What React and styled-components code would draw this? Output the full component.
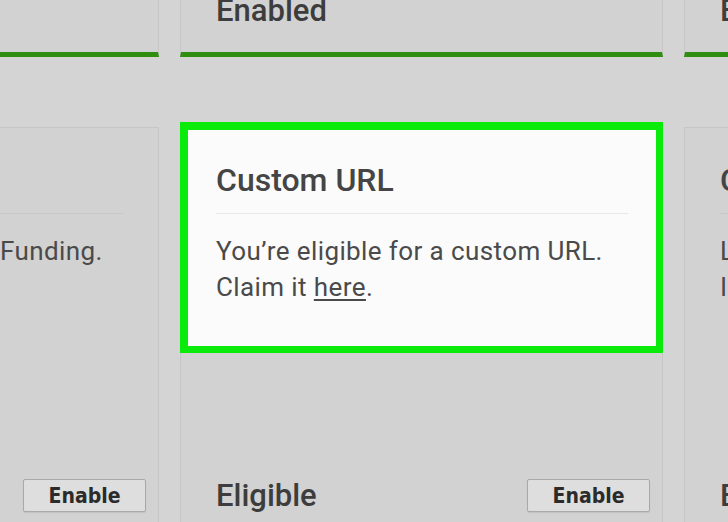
import React from "react";
import styled, { createGlobalStyle } from "styled-components";

//------------------------------ CSS ----------------------------------------
const GlobalStyle = createGlobalStyle`
    html, body {
        margin:0;
        padding:0;
        background:#d4d4d4;
        overflow:hidden;
    }
    body{
        font-family: Roboto, "Liberation Sans", sans-serif;
    }
`;
const StyledPage = styled.div`
    width:728px;
    height:522px;
    overflow:hidden;
    display:flex;
    flex-direction:column;
    gap:70px;
`;
const StyledRow = styled.div`
    display:grid;
    grid-template-columns:repeat(3, 483px);
    column-gap:21px;
    margin-left:-324px;
`;
const StyledTopCard = styled.div`
    margin-top:-6px;
    background:#d2d2d2;
    border:1px solid #c6c6c6;
    border-top:none;
    border-bottom:5px solid #2f8d10;
    padding-bottom:25px;
`;
const StyledCard = styled.div`
    background:#d2d2d2;
    border:1px solid #c6c6c6;
    min-height:480px;
    display:flex;
    flex-direction:column;
`;
const StyledPanel = styled.div`
    box-sizing:border-box;
    height:231px;
    margin:-6px -1px 0;
    border-style:solid;
    border-width:8px 7px 7px 8px;
    border-color:${p => p.$highlight ? '#0beb0b' : 'transparent'};
    background:${p => p.$highlight ? '#fbfbfb' : 'transparent'};
    padding:31px 28px 0 28px;
`;
const StyledTitle = styled.h3`
    margin:0;
    font-size:32px;
    line-height:38px;
    font-weight:500;
    color:#454545;
    white-space:nowrap;
`;
const StyledDivider = styled.div`
    margin-top:14px;
    height:1px;
    background:${p => p.$highlight ? '#e8e8e8' : '#c8c8c8'};
`;
const StyledText = styled.p`
    margin:19px 0 0;
    font-size:26px;
    line-height:36px;
    letter-spacing:0.4px;
    color:#4a4a4a;
    white-space:nowrap;
    a{
        color:inherit;
        text-decoration:underline;
        text-underline-offset:3px;
    }
`;
const StyledFooter = styled.div`
    height:33px;
    margin-top:${p => p.$top ? '0' : '126px'};
    padding:0 12px 0 35px;
    display:flex;
    align-items:center;
    justify-content:space-between;
`;
const StyledStatus = styled.span`
    font-size:31px;
    line-height:33px;
    font-weight:500;
    color:#3d3d3d;
`;
const StyledButton = styled.button`
    box-sizing:border-box;
    width:123px;
    height:33px;
    padding:0;
    border:1px solid #a9a9a9;
    border-radius:2px;
    background:#dedede;
    box-shadow:0 1px 1px rgba(0,0,0,0.08);
    font-family:"DejaVu Sans Condensed", "DejaVu Sans", sans-serif;
    font-stretch:condensed;
    font-weight:bold;
    font-size:21px;
    color:#2b2b2b;
    cursor:pointer;
`;

//------------------------------ DATA ---------------------------------------
const topCards = ['Enabled', 'Enabled', 'Enabled'];

const cards = [
    {
        title : 'Donations',
        text : <>Accept donations using Funding.<br/>Learn more.</>,
        status : 'Eligible',
        button : true
    },
    {
        title : 'Custom URL',
        text : <>You’re eligible for a custom URL.<br/>Claim it <a href="#">here</a>.</>,
        status : 'Eligible',
        button : true,
        highlight : true
    },
    {
        title : 'Campaigns',
        text : <>Launch a campaign today.<br/>Ill take only a minute.</>,
        status : 'Eligible',
        button : true
    }
];

//------------------------------ COMPONENT ----------------------------------
const App = () => {
    return(
        <StyledPage>
            <GlobalStyle />
            <StyledRow>
                {topCards.map((status, index) => (
                    <StyledTopCard key={index}>
                        <StyledFooter $top>
                            <StyledStatus>{status}</StyledStatus>
                        </StyledFooter>
                    </StyledTopCard>
                ))}
            </StyledRow>
            <StyledRow>
                {cards.map((item, index) => (
                    <StyledCard key={index}>
                        <StyledPanel $highlight={item.highlight}>
                            <StyledTitle>{item.title}</StyledTitle>
                            <StyledDivider $highlight={item.highlight} />
                            <StyledText>{item.text}</StyledText>
                        </StyledPanel>
                        <StyledFooter>
                            <StyledStatus>{item.status}</StyledStatus>
                            {item.button ? <StyledButton>Enable</StyledButton> : null}
                        </StyledFooter>
                    </StyledCard>
                ))}
            </StyledRow>
        </StyledPage>
    )
}

export default App;
